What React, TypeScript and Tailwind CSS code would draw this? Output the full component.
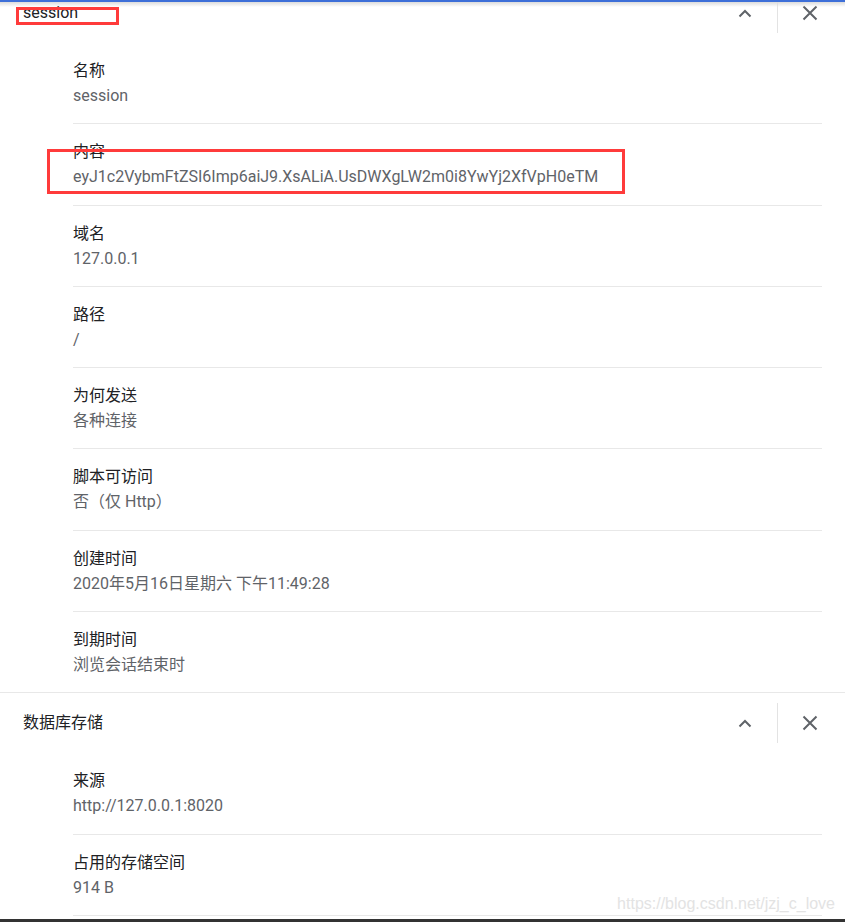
const FONT = "font-['Roboto','Noto_Sans_CJK_SC',sans-serif]";

interface Field {
  label: string;
  value: string;
}

const COOKIE_FIELDS: Field[] = [
  { label: "名称", value: "session" },
  { label: "内容", value: "eyJ1c2VybmFtZSI6Imp6aiJ9.XsALiA.UsDWXgLW2m0i8YwYj2XfVpH0eTM" },
  { label: "域名", value: "127.0.0.1" },
  { label: "路径", value: "/" },
  { label: "为何发送", value: "各种连接" },
  { label: "脚本可访问", value: "否（仅 Http）" },
  { label: "创建时间", value: "2020年5月16日星期六 下午11:49:28" },
  { label: "到期时间", value: "浏览会话结束时" },
];

const STORAGE_FIELDS: Field[] = [
  { label: "来源", value: "http://127.0.0.1:8020" },
  { label: "占用的存储空间", value: "914 B" },
];

function ChevronUp() {
  return (
    <svg width="14" height="9" viewBox="0 0 14 9" fill="none">
      <path d="M1.5 7.5 L7 2 L12.5 7.5" stroke="#5f6368" strokeWidth="2" />
    </svg>
  );
}

function CloseIcon() {
  return (
    <svg width="16" height="16" viewBox="0 0 16 16" fill="none">
      <path d="M1.5 1.5 L14.5 14.5 M14.5 1.5 L1.5 14.5" stroke="#5f6368" strokeWidth="2" />
    </svg>
  );
}

function SectionHeader({ title, className }: { title: string; className?: string }) {
  return (
    <div className={`flex h-[60px] items-center pl-[23px] pr-[15px] ${className ?? ""}`}>
      <span className="flex-1 text-[16px] text-[#202124]">{title}</span>
      <button className="flex h-10 w-10 items-center justify-center">
        <ChevronUp />
      </button>
      <div className="mx-[12px] h-10 w-px bg-[#e3e3e3]" />
      <button className="flex h-10 w-10 items-center justify-center">
        <CloseIcon />
      </button>
    </div>
  );
}

function FieldRow({ field, last }: { field: Field; last: boolean }) {
  return (
    <div className="pl-[73px] pr-[23px]">
      <div className={`pt-[18px] pb-[17.3px] ${last ? "" : "border-b border-[#e8e8e8]"}`}>
        <div className="text-[16px] leading-5 text-[#202124]">{field.label}</div>
        <div className="mt-[5px] text-[16px] leading-5 text-[#5f6368]">{field.value}</div>
      </div>
    </div>
  );
}

export default function App() {
  return (
    <div className={`relative h-[922px] w-[845px] overflow-hidden bg-white ${FONT}`}>
      <div className="absolute inset-x-0 top-0 z-10 h-[2px] bg-[#3d6fd8]" />
      <div className="absolute inset-x-0 top-[2px] z-10 h-[5px] bg-gradient-to-b from-[#dcdcdc] to-transparent" />

      <section className="border-b border-[#e8e8e8]">
        <SectionHeader title="session" className="-mt-[17px]" />
        {COOKIE_FIELDS.map((f, i) => (
          <FieldRow key={f.label} field={f} last={i === COOKIE_FIELDS.length - 1} />
        ))}
      </section>

      <section>
        <SectionHeader title="数据库存储" />
        {STORAGE_FIELDS.map((f) => (
          <FieldRow key={f.label} field={f} last={false} />
        ))}
      </section>

      <div className="absolute inset-x-0 bottom-0 h-[3px] bg-[#333333]" />

      {/* annotation boxes */}
      <div className="absolute left-[16px] top-[7px] h-[18px] w-[103px] border-[3px] border-[#ff3b3b]" />
      <div className="absolute left-[47px] top-[149px] h-[45px] w-[578px] border-[3px] border-[#ff3b3b]" />

      <div className="absolute right-[10px] top-[892px] font-['Liberation_Sans',sans-serif] text-[16px] text-[#e3e3e3]">
        https://blog.csdn.net/jzj_c_love
      </div>
    </div>
  );
}
